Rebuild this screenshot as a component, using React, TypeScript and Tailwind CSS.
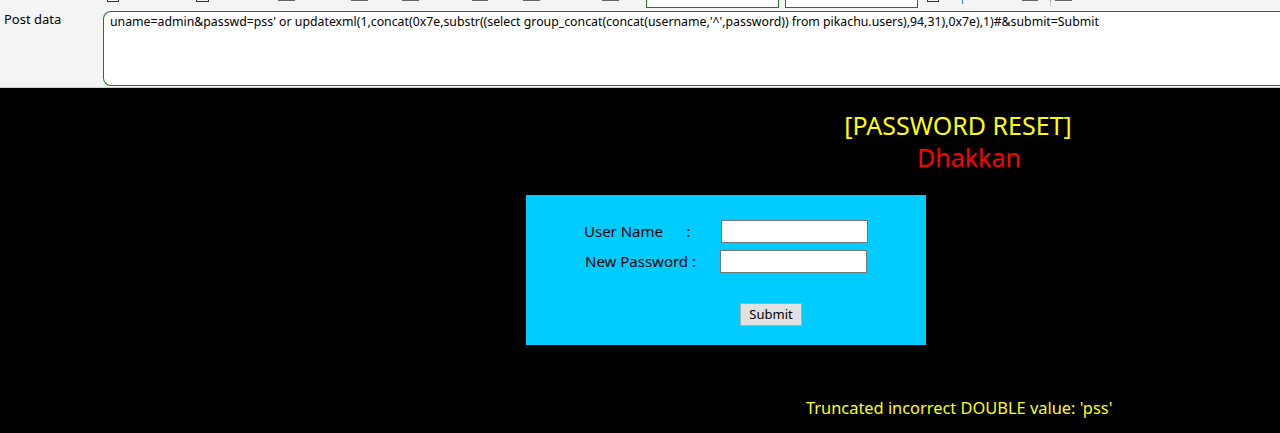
import React from 'react';

const font = { fontFamily: '"Noto Sans", "Open Sans", sans-serif' };

// 上部に切れて見えるツールバーの残り
function TopStrip() {
  return (
    <div className="flex h-[9px] items-start overflow-hidden">
      <div className="ml-[107px] h-[2px] w-[12px] border-x border-b border-[#333]" />
      <div className="ml-[77px] h-[2px] w-[13px] border-x border-b border-[#333]" />
      <div className="ml-[69px] h-[1px] w-[17px] bg-[#666]" />
      <div className="ml-[56px] h-[1px] w-[17px] bg-[#666]" />
      <div className="ml-[34px] h-[1px] w-[17px] bg-[#666]" />
      <div className="ml-[53px] h-[1px] w-[16px] bg-[#666]" />
      <div className="ml-[35px] h-[1px] w-[17px] bg-[#666]" />
      <div className="ml-[62px] h-[1px] w-[17px] bg-[#666]" />
      <div className="ml-[27px] h-[8px] w-[133px] border-x border-b border-[#1a7f1a] bg-white" />
      <div className="ml-[6px] h-[8px] w-[133px] border-x border-b border-[#1a7f1a] bg-white" />
      <div className="ml-[9px] h-[2px] w-[12px] border-x border-b border-[#333]" />
      <div className="ml-[23px] h-[4px] w-[1px] bg-[#3b7fd0]" />
      <div className="ml-[59px] h-[1px] w-[16px] bg-[#666]" />
      <div className="ml-[12px] h-[6px] w-[1px] border-l border-dotted border-[#999]" />
      <div className="ml-[4px] h-[1px] w-[17px] bg-[#666]" />
    </div>
  );
}

export default function App() {
  return (
    <div className="h-[433px] w-[1280px] overflow-hidden bg-black" style={font}>
      <div className="h-[88px] border-b border-[#cfcfcf] bg-[#f4f4f4]">
        <TopStrip />
        <div className="flex">
          <div className="w-[103px] pl-[4px] pt-[1px] text-[13px] text-black">Post data</div>
          <div className="mt-[2px] h-[75px] flex-1 rounded-l-[8px] border border-r-0 border-[#1a7f1a] bg-white pl-[6px] pt-[1px] text-[12.3px] text-black">
            uname=admin&amp;passwd=pss' or updatexml(1,concat(0x7e,substr((select group_concat(concat(username,'^',password)) from pikachu.users),94,31),0x7e),1)#&amp;submit=Submit
          </div>
        </div>
      </div>

      <div className="flex flex-col items-center pl-[636px] pt-[21px] text-[25px] leading-[32px]">
        <div className="text-[#ffff00]">[PASSWORD RESET]</div>
        <div className="pl-[22px] text-[#ff0000]">Dhakkan</div>
      </div>

      <div className="ml-[526px] mt-[22px] flex h-[150px] w-[400px] flex-col bg-[#00ccff] pt-[25px] text-[15px] text-black">
        <div className="flex items-center pl-[58px]">
          <span className="w-[137px]">User Name&nbsp;&nbsp;&nbsp;&nbsp;&nbsp;&nbsp;:</span>
          <div className="h-[23px] w-[147px] border border-[#767676] bg-white" />
        </div>
        <div className="mt-[7px] flex items-center pl-[59px]">
          <span className="w-[135px]">New Password :</span>
          <div className="h-[23px] w-[147px] border border-[#767676] bg-white" />
        </div>
        <div className="mt-[30px] flex pl-[214px]">
          <button className="h-[23px] w-[62px] border border-[#adadad] bg-[#e1e1e1] text-[13px] text-black">
            Submit
          </button>
        </div>
      </div>

      <div className="ml-[806px] mt-[51px] text-[16.4px] text-[#ffff00]">
        Truncated incorrect DOUBLE value: 'pss'
      </div>
    </div>
  );
}
